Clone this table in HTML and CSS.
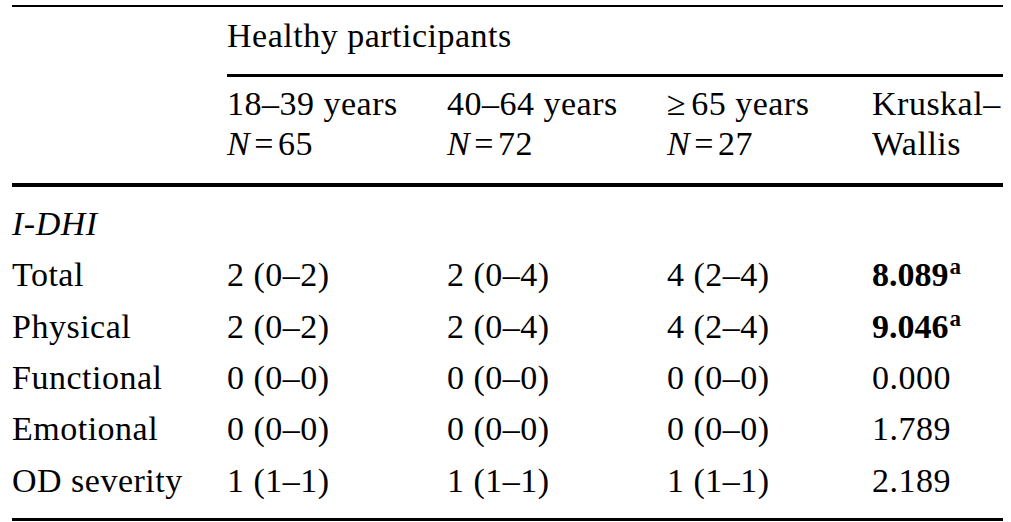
FILE: index.html
```html
<!DOCTYPE html>
<html lang="en">
<head>
<meta charset="utf-8">
<title>I-DHI by age group</title>
<link rel="stylesheet" href="styles.css">
</head>
<body>
<table class="stats">
  <colgroup>
    <col class="c-label">
    <col class="c-g1">
    <col class="c-g2">
    <col class="c-g3">
    <col class="c-kw">
  </colgroup>
  <thead>
    <tr class="h1">
      <th class="corner" rowspan="2"></th>
      <th class="group" colspan="4">Healthy participants</th>
    </tr>
    <tr class="h2">
      <th>18–39 years<br><i>N</i><span class="eq">=</span>65</th>
      <th>40–64 years<br><i>N</i><span class="eq">=</span>72</th>
      <th><span class="ge">≥</span>65 years<br><i>N</i><span class="eq">=</span>27</th>
      <th>Kruskal–<br>Wallis</th>
    </tr>
  </thead>
  <tbody>
    <tr class="first"><td colspan="5"><i>I-DHI</i></td></tr>
    <tr><td>Total</td><td>2 (0–2)</td><td>2 (0–4)</td><td>4 (2–4)</td><td><b>8.089<sup>a</sup></b></td></tr>
    <tr><td>Physical</td><td>2 (0–2)</td><td>2 (0–4)</td><td>4 (2–4)</td><td><b>9.046<sup>a</sup></b></td></tr>
    <tr><td>Functional</td><td>0 (0–0)</td><td>0 (0–0)</td><td>0 (0–0)</td><td>0.000</td></tr>
    <tr><td>Emotional</td><td>0 (0–0)</td><td>0 (0–0)</td><td>0 (0–0)</td><td>1.789</td></tr>
    <tr class="last"><td>OD severity</td><td>1 (1–1)</td><td>1 (1–1)</td><td>1 (1–1)</td><td>2.189</td></tr>
  </tbody>
</table>
</body>
</html>
```
FILE: styles.css
```css
html, body {
  margin: 0;
  padding: 0;
  background: #ffffff;
}

body {
  padding-top: 5px;
  color: #000000;
  font-family: "Liberation Serif", "Times New Roman", serif;
  font-size: 34px;
  letter-spacing: 0.5px;
}

.stats {
  margin-left: 12px;
  width: 991px;
  table-layout: fixed;
  border-collapse: separate;
  border-spacing: 0;
}

.c-label { width: 215px; }
.c-g1 { width: 220px; }
.c-g2 { width: 220px; }
.c-g3 { width: 205px; }
.c-kw { width: 131px; }

.stats th,
.stats td {
  padding: 0;
  text-align: left;
  font-weight: normal;
  vertical-align: top;
  white-space: nowrap;
}

.stats thead th {
  line-height: 40px;
}

.h1 th {
  border-top: 2px solid #000;
}

.h1 .group {
  padding-top: 8.5px;
  padding-bottom: 18.5px;
  border-bottom: 3px solid #000;
}

.corner {
  border-bottom: 4px solid #000;
}

.h2 th {
  padding-top: 6.5px;
  padding-bottom: 19.5px;
  border-bottom: 4px solid #000;
}

.eq {
  margin: 0 4px;
}

.ge {
  margin-right: 5px;
}

.stats tbody td {
  line-height: 51.4px;
}

.stats tbody tr.first td {
  padding-top: 10.8px;
}

.stats tbody tr.last td {
  padding-bottom: 11.8px;
  border-bottom: 3px solid #000;
}

.stats b {
  font-weight: bold;
  letter-spacing: 0;
}

.stats sup {
  font-size: 23px;
  line-height: 0;
  vertical-align: 12px;
  letter-spacing: 0;
  margin-left: 1px;
}
```
